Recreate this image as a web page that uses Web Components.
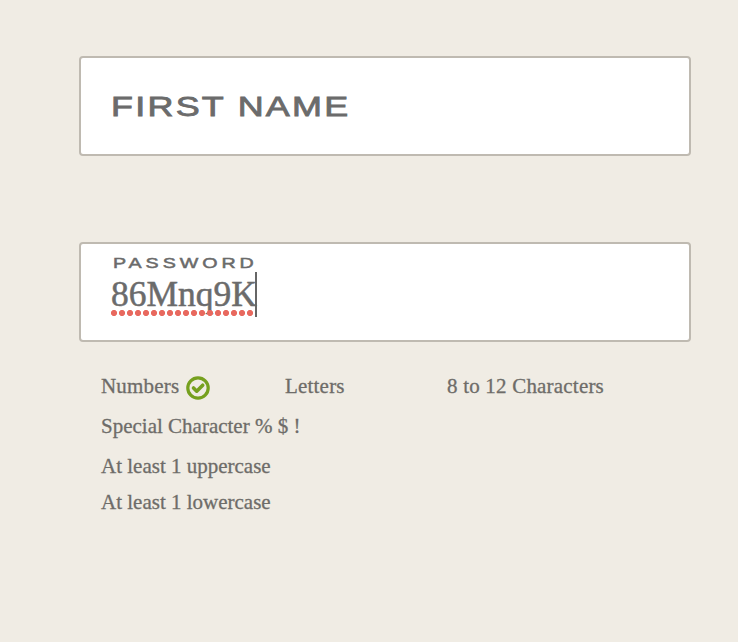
<!DOCTYPE html>
<html>
<head>
<meta charset="utf-8">
<title>Sign up</title>
<style>
    html, body { margin: 0; background: #f0ece4; }
    body { height: 642px; overflow: hidden; }
</style>
</head>
<body>
<signup-form>
    <text-field label="First Name"></text-field>
    <password-field label="Password" value="86Mnq9K"></password-field>
    <rule-list>
        <rule-row columns>
            <rule-item done>Numbers</rule-item>
            <rule-item>Letters</rule-item>
            <rule-item>8 to 12 Characters</rule-item>
        </rule-row>
        <rule-row style="--row-h:40px"><rule-item>Special Character % $ !</rule-item></rule-row>
        <rule-row style="--row-h:40px"><rule-item>At least 1 uppercase</rule-item></rule-row>
        <rule-row style="--row-h:32px"><rule-item>At least 1 lowercase</rule-item></rule-row>
    </rule-list>
</signup-form>

<script>
const BOX_CSS = `
    :host {
        display: block;
        box-sizing: border-box;
        width: 612px;
        height: 100px;
        background: #fff;
        border: 2px solid #bfbab1;
        border-radius: 4px;
        color: #6b6b6b;
        position: relative;
    }
    .wide {
        display: block;
        font-family: "Liberation Sans", sans-serif;
        text-transform: uppercase;
        white-space: nowrap;
        transform-origin: left top;
    }
`;

class SignupForm extends HTMLElement {
    constructor() {
        super();
        this.attachShadow({ mode: 'open' });
        this.shadowRoot.innerHTML = `
            <style>
                :host {
                    display: flex;
                    flex-direction: column;
                    gap: 86px;
                    padding: 56px 0 0 79px;
                }
            </style>
            <slot></slot>
        `;
    }
}

class TextField extends HTMLElement {
    constructor() {
        super();
        this.attachShadow({ mode: 'open' });
        this.shadowRoot.innerHTML = `
            <style>
                ${BOX_CSS}
                :host { display: flex; align-items: center; padding: 2px 0 0 30px; }
                .wide {
                    font-size: 27px;
                    letter-spacing: 1.7px;
                    line-height: 30px;
                    transform: scaleX(1.33);
                    -webkit-text-stroke: 0.8px #6b6b6b;
                }
            </style>
            <span class="wide"></span>
        `;
        this.shadowRoot.querySelector('.wide').textContent = this.getAttribute('label');
    }
}

class PasswordField extends HTMLElement {
    constructor() {
        super();
        this.attachShadow({ mode: 'open' });
        this.shadowRoot.innerHTML = `
            <style>
                ${BOX_CSS}
                :host { display: flex; flex-direction: column; padding: 10px 0 0 32px; }
                .wide {
                    align-self: flex-start;
                    font-size: 15px;
                    letter-spacing: 3px;
                    line-height: 18px;
                    transform: scaleX(1.31);
                    -webkit-text-stroke: 0.5px #6b6b6b;
                }
                .value {
                    font-family: "Liberation Serif", serif;
                    font-size: 35.5px;
                    line-height: 40px;
                    margin: 2px 0 0 -2px;
                    white-space: nowrap;
                    align-self: flex-start;
                    position: relative;
                    -webkit-text-stroke: 0.5px #6b6b6b;
                }
                .dots {
                    position: absolute;
                    left: 0;
                    top: 36px;
                    width: 144px;
                    height: 6px;
                    background: radial-gradient(circle at 3px 3px, #e8695f 2.8px, transparent 3.2px) 0 0 / 8px 6px repeat-x;
                }
                .caret {
                    position: absolute;
                    left: 144px;
                    top: -2px;
                    width: 2px;
                    height: 45px;
                    background: #666;
                }
            </style>
            <span class="wide"></span>
            <span class="value"><span class="text"></span><i class="dots"></i><i class="caret"></i></span>
        `;
        this.shadowRoot.querySelector('.wide').textContent = this.getAttribute('label');
        this.shadowRoot.querySelector('.text').textContent = this.getAttribute('value');
    }
}

class RuleList extends HTMLElement {
    constructor() {
        super();
        this.attachShadow({ mode: 'open' });
        this.shadowRoot.innerHTML = `
            <style>
                :host {
                    display: block;
                    margin-top: -62px;
                    padding-left: 22px;
                    color: #6e6c69;
                    font: 21px/24px "Liberation Serif", serif;
                    -webkit-text-stroke: 0.3px #6e6c69;
                }
            </style>
            <slot></slot>
        `;
    }
}

class RuleRow extends HTMLElement {
    constructor() {
        super();
        this.attachShadow({ mode: 'open' });
        this.shadowRoot.innerHTML = `
            <style>
                :host {
                    display: flex;
                    align-items: center;
                    height: var(--row-h, 40px);
                }
                :host([columns]) {
                    display: grid;
                    grid-template-columns: 184px 162px auto;
                    letter-spacing: 0.2px;
                }
            </style>
            <slot></slot>
        `;
    }
}

class RuleItem extends HTMLElement {
    constructor() {
        super();
        this.attachShadow({ mode: 'open' });
        const check = this.hasAttribute('done') ? `
            <svg width="24" height="24" viewBox="0 0 24 24" fill="none" stroke="#76a01e">
                <circle cx="12" cy="12" r="10.2" stroke-width="3.2"/>
                <path d="M7.5 12l3.2 3.2 6-6" stroke-width="3.6" stroke-linecap="round" stroke-linejoin="round"/>
            </svg>` : '';
        this.shadowRoot.innerHTML = `
            <style>
                :host { display: flex; align-items: center; gap: 7px; white-space: nowrap; }
                svg { flex: none; margin-top: 3px; }
            </style>
            <slot></slot>${check}
        `;
    }
}

customElements.define('signup-form', SignupForm);
customElements.define('text-field', TextField);
customElements.define('password-field', PasswordField);
customElements.define('rule-list', RuleList);
customElements.define('rule-row', RuleRow);
customElements.define('rule-item', RuleItem);
</script>
</body>
</html>
